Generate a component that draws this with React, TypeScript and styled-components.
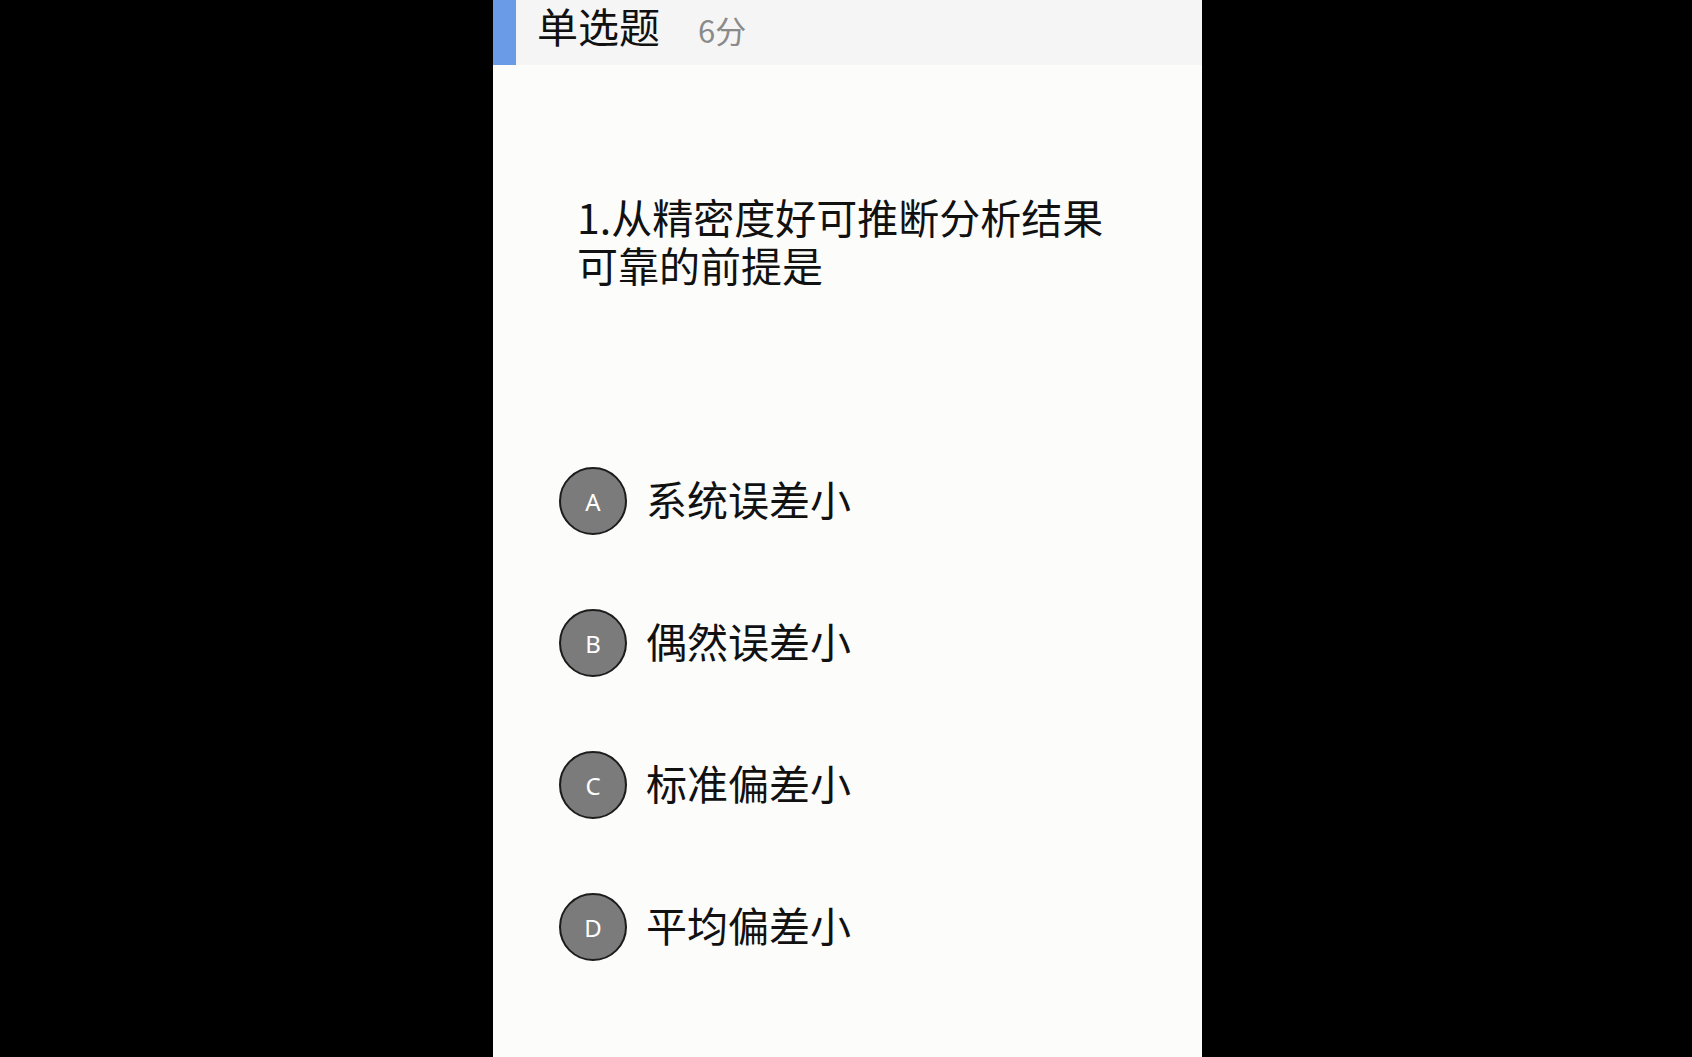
import React from 'react';
import styled, { createGlobalStyle } from 'styled-components';

const GlobalStyle = createGlobalStyle`
  html, body {
    margin: 0;
    padding: 0;
    background: #000;
  }
  body {
    font-family: "Noto Sans CJK SC", "Noto Sans", sans-serif;
  }
`;

const Screen = styled.div`
  display: flex;
  justify-content: center;
  min-height: 100vh;
  padding-left: 3px;
  background: #000;
`;

const Paper = styled.div`
  width: 709px;
  min-height: 100vh;
  background: #fcfcfa;
  display: flex;
  flex-direction: column;
`;

const Header = styled.div`
  height: 65px;
  background: #f5f5f5;
  border-left: 23px solid #6a9be6;
  display: flex;
  align-items: baseline;
  padding: 5px 0 0 21px;
  gap: 38px;
  box-sizing: border-box;
`;

const Title = styled.span`
  font-size: 41px;
  line-height: 1;
  color: #111;
`;

const Score = styled.span`
  font-size: 31px;
  line-height: 1;
  color: #8a8a8a;
`;

const Question = styled.div`
  margin: 127px 0 0 84px;
  max-width: 545px;
  font-size: 41px;
  line-height: 48px;
  color: #111;
`;

const Options = styled.div`
  display: flex;
  flex-direction: column;
  gap: 74px;
  margin: 179px 0 0 66px;
`;

const OptionRow = styled.div`
  display: flex;
  align-items: center;
  gap: 19px;
`;

const Badge = styled.div`
  width: 68px;
  height: 68px;
  border-radius: 50%;
  background: #7b7b7b;
  border: 2px solid #1c1c1c;
  box-sizing: border-box;
  display: flex;
  align-items: center;
  justify-content: center;
  color: #fff;
  font-size: 24px;
  font-family: "Noto Sans", "Open Sans", sans-serif;
`;

const OptionText = styled.span`
  font-size: 41px;
  line-height: 1;
  color: #111;
  margin-top: -6px;
`;

const options = [
  { key: 'A', text: '系统误差小' },
  { key: 'B', text: '偶然误差小' },
  { key: 'C', text: '标准偏差小' },
  { key: 'D', text: '平均偏差小' },
];

export default function App() {
  return (
    <>
      <GlobalStyle />
      <Screen>
        <Paper>
          <Header>
            <Title>单选题</Title>
            <Score>6分</Score>
          </Header>
          <Question>1.从精密度好可推断分析结果可靠的前提是</Question>
          <Options>
            {options.map(o => (
              <OptionRow key={o.key}>
                <Badge>{o.key}</Badge>
                <OptionText>{o.text}</OptionText>
              </OptionRow>
            ))}
          </Options>
        </Paper>
      </Screen>
    </>
  );
}
